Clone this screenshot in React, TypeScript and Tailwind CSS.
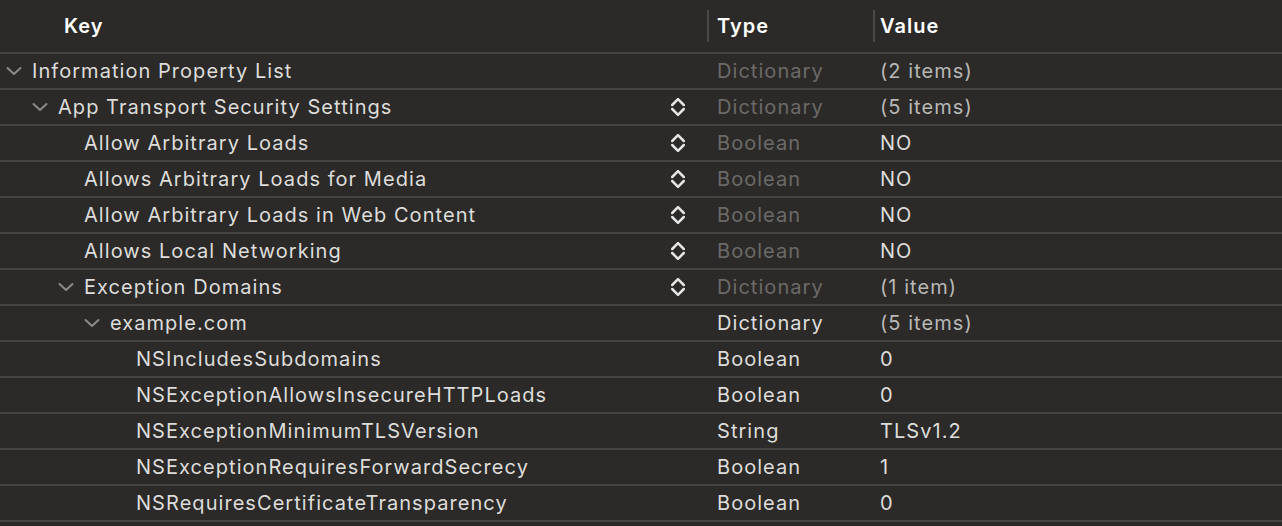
type Row = {
  key: string;
  level: number;
  expanded?: boolean;
  stepper?: boolean;
  type: string;
  typeDim?: boolean;
  value: string;
  valueDim?: boolean;
};

const rows: Row[] = [
  { key: "Information Property List", level: 0, expanded: true, type: "Dictionary", typeDim: true, value: "(2 items)", valueDim: true },
  { key: "App Transport Security Settings", level: 1, expanded: true, stepper: true, type: "Dictionary", typeDim: true, value: "(5 items)", valueDim: true },
  { key: "Allow Arbitrary Loads", level: 2, stepper: true, type: "Boolean", typeDim: true, value: "NO" },
  { key: "Allows Arbitrary Loads for Media", level: 2, stepper: true, type: "Boolean", typeDim: true, value: "NO" },
  { key: "Allow Arbitrary Loads in Web Content", level: 2, stepper: true, type: "Boolean", typeDim: true, value: "NO" },
  { key: "Allows Local Networking", level: 2, stepper: true, type: "Boolean", typeDim: true, value: "NO" },
  { key: "Exception Domains", level: 2, expanded: true, stepper: true, type: "Dictionary", typeDim: true, value: "(1 item)", valueDim: true },
  { key: "example.com", level: 3, expanded: true, type: "Dictionary", value: "(5 items)", valueDim: true },
  { key: "NSIncludesSubdomains", level: 4, type: "Boolean", value: "0" },
  { key: "NSExceptionAllowsInsecureHTTPLoads", level: 4, type: "Boolean", value: "0" },
  { key: "NSExceptionMinimumTLSVersion", level: 4, type: "String", value: "TLSv1.2" },
  { key: "NSExceptionRequiresForwardSecrecy", level: 4, type: "Boolean", value: "1" },
  { key: "NSRequiresCertificateTransparency", level: 4, type: "Boolean", value: "0" },
];

function Disclosure() {
  return (
    <svg width="16" height="10" viewBox="0 0 16 10" className="text-[#8c8b89]">
      <path d="M1.5 2 L8 8 L14.5 2" fill="none" stroke="currentColor" strokeWidth="2" strokeLinecap="round" strokeLinejoin="round" />
    </svg>
  );
}

function Stepper() {
  return (
    <svg width="16" height="20" viewBox="0 0 16 20" className="text-[#e6e6e6]">
      <path d="M2.2 8 L8 2.2 L13.8 8" fill="none" stroke="currentColor" strokeWidth="2.5" strokeLinecap="round" strokeLinejoin="round" />
      <path d="M2.2 12 L8 17.8 L13.8 12" fill="none" stroke="currentColor" strokeWidth="2.5" strokeLinecap="round" strokeLinejoin="round" />
    </svg>
  );
}

export default function App() {
  return (
    <div
      className="h-[526px] w-[1282px] overflow-hidden bg-[#2b2a28] text-[20px] tracking-[1.05px] text-[#dedddb]"
      style={{ fontFamily: "Inter, 'Noto Sans', sans-serif" }}
    >
      <div className="grid h-[54px] grid-cols-[707px_166px_1fr] items-center border-b-2 border-[#454442] font-semibold text-white">
        <div className="pl-[64px]">Key</div>
        <div className="flex h-[32px] items-center border-l-2 border-[#4a4947] pl-[8px]">Type</div>
        <div className="flex h-[32px] items-center border-l-2 border-[#4a4947] pl-[5px]">Value</div>
      </div>

      {rows.map((row) => (
        <div
          key={row.key}
          className="grid h-[36px] grid-cols-[707px_166px_1fr] items-center border-b-2 border-[#454442]"
        >
          <div className="flex items-center" style={{ paddingLeft: 6 + row.level * 26 }}>
            <div className="flex w-[26px] items-center">{row.expanded && <Disclosure />}</div>
            <span className="flex-1 whitespace-nowrap">{row.key}</span>
            {row.stepper && (
              <div className="mr-[21px] flex items-center">
                <Stepper />
              </div>
            )}
          </div>
          <div className={`pl-[10px] ${row.typeDim ? "text-[#6b6a68]" : ""}`}>{row.type}</div>
          <div className={`pl-[7px] ${row.valueDim ? "text-[#b9b8b6]" : ""}`}>{row.value}</div>
        </div>
      ))}
    </div>
  );
}
